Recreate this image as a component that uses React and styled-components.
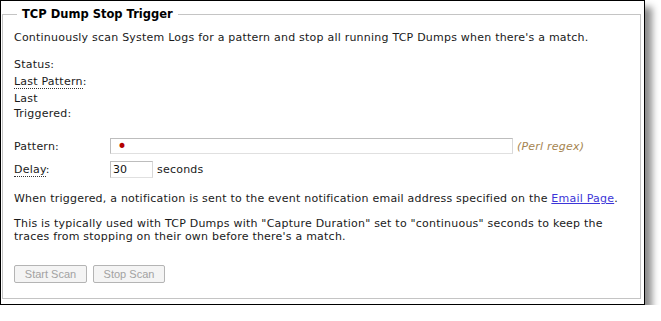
import React from "react";
import styled, { createGlobalStyle } from "styled-components";

const Global = createGlobalStyle`
  html, body {
    margin: 0;
    padding: 0;
    background: #fff;
  }
  body {
    font-family: "DejaVu Sans", Verdana, sans-serif;
    font-size: 11px;
    letter-spacing: 0.22px;
    color: #1a1a1a;
  }
`;

// the window frame with its drop shadow
const Frame = styled.div`
  width: 643px;
  height: 303px;
  border: 1px solid #000;
  box-shadow: 7px 7px 7px rgba(0, 0, 0, 0.45);
  background: #fff;
  display: flex;
`;

const Fieldset = styled.fieldset`
  flex: 1;
  margin: 6px 3px 5px 1px;
  padding: 10px 11px 0 11px;
  border: 1px solid #c4c4c4;
  min-width: 0;
`;

const Legend = styled.legend`
  margin-left: 3px;
  padding: 0 5px;
  font-weight: bold;
  font-size: 11.5px;
  letter-spacing: 0;
  line-height: 14px;
  color: #000;
`;

const Para = styled.p`
  margin: ${(p) => p.$mt || 0}px 0 0 0;
  line-height: 13px;
`;

const StatusGrid = styled.div`
  display: grid;
  grid-template-columns: 74px 1fr;
  row-gap: 2px;
  margin-top: 13px;
  line-height: 15px;
`;

const Label = styled.span`
  display: inline;
  ${(p) =>
    p.$hint &&
    `
    border-bottom: 1px dotted #333;
    cursor: help;
  `}
`;

const FormRow = styled.div`
  display: flex;
  align-items: center;
  margin-top: ${(p) => p.$mt}px;
`;

const FieldLabel = styled.div`
  width: 96px;
  flex: none;
`;

const TextInput = styled.input`
  box-sizing: border-box;
  width: ${(p) => p.$w}px;
  height: ${(p) => p.$h}px;
  border: 1px solid #bdbdbd;
  border-bottom-color: #e0e0e0;
  border-right-color: #d8d8d8;
  padding: 0 0 0 ${(p) => p.$pl || 2}px;
  font-family: "DejaVu Sans", Verdana, sans-serif;
  font-size: ${(p) => p.$fs || 11}px;
  color: ${(p) => p.$color || "#111"};
  outline: none;
`;

const Hint = styled.span`
  margin-left: 4px;
  font-style: italic;
  color: #a5844f;
`;

const Unit = styled.span`
  margin-left: 4px;
`;

const EmailLink = styled.a`
  color: #3c35d8;
  text-decoration: underline;
`;

const Buttons = styled.div`
  display: flex;
  gap: 6px;
  margin-top: 22px;
`;

const Button = styled.button`
  box-sizing: border-box;
  width: ${(p) => p.$w}px;
  height: 18px;
  padding: 0;
  border: 1px solid #b4b4b4;
  border-radius: 2px;
  background: #f4f4f4;
  color: #a2a2a2;
  font-family: "Liberation Sans", Arial, sans-serif;
  font-size: 11px;
`;

export default function App() {
  return (
    <>
      <Global />
      <Frame>
        <Fieldset>
          <Legend>TCP Dump Stop Trigger</Legend>
          <Para>
            Continuously scan System Logs for a pattern and stop all running TCP
            Dumps when there's a match.
          </Para>

          <StatusGrid>
            <span>Status:</span>
            <span />
            <span>
              <Label $hint>Last Pattern</Label>:
            </span>
            <span />
            <span>Last Triggered:</span>
            <span />
          </StatusGrid>

          <FormRow $mt={17}>
            <FieldLabel>Pattern:</FieldLabel>
            <TextInput
              $w={403}
              $h={16}
              $color="#b30000"
              $fs={17}
              $pl={6}
              defaultValue={"\u2022"}
            />
            <Hint>(Perl regex)</Hint>
          </FormRow>
          <FormRow $mt={7}>
            <FieldLabel>
              <Label $hint>Delay</Label>:
            </FieldLabel>
            <TextInput $w={43} $h={17} defaultValue="30" />
            <Unit>seconds</Unit>
          </FormRow>

          <Para $mt={14}>
            When triggered, a notification is sent to the event notification
            email address specified on the <EmailLink href="#">Email Page</EmailLink>.
          </Para>
          <Para $mt={12}>
            This is typically used with TCP Dumps with "Capture Duration" set to
            "continuous" seconds to keep the traces from stopping on their own
            before there's a match.
          </Para>

          <Buttons>
            <Button $w={73} disabled>
              Start Scan
            </Button>
            <Button $w={72} disabled>
              Stop Scan
            </Button>
          </Buttons>
        </Fieldset>
      </Frame>
    </>
  );
}
